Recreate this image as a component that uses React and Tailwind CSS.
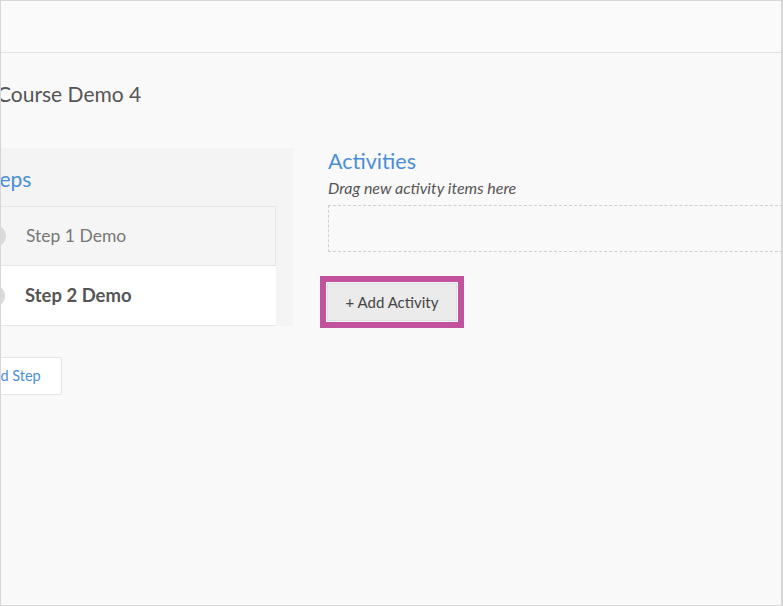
import React from "react";

const steps = [
  { name: "Step 1 Demo", active: false },
  { name: "Step 2 Demo", active: true },
];

function StepRow({ step }) {
  return (
    <div
      className={`flex items-center h-[60px] border-[#e6e6e6] ${
        step.active ? "bg-white border-b" : "bg-[#f5f5f5] border"
      }`}
    >
      <span className="w-[22px] h-[22px] rounded-full bg-[#dadada] shrink-0 ml-[2px]" />
      <span
        className={`ml-[20px] ${
          step.active ? "text-[18.5px] font-bold text-[#555]" : "text-[17.5px] text-[#777]"
        }`}
      >
        {step.name}
      </span>
    </div>
  );
}

export default function App() {
  return (
    <div
      className="w-[783px] h-[606px] overflow-hidden bg-[#f9f9f9] border border-r-2 border-[#d6d6d6] flex flex-col"
      style={{ fontFamily: "Lato, 'Open Sans', sans-serif" }}
    >
      {/* top bar */}
      <div className="h-[52px] shrink-0 bg-[#fafafa] border-b border-[#e2e2e2]" />

      <div className="ml-[-37px]">
        <h1 className="ml-[33px] mt-[27px] text-[21px] leading-[28px] text-[#555]">
          Course Demo 4
        </h1>

        <div className="flex mt-[40px]">
          {/* steps column */}
          <div className="w-[329px] shrink-0">
            <div className="bg-[#f4f4f4] pt-[17px] pr-[17px] pl-[17px]">
              <h2 className="text-[21px] leading-[28px] text-[#4b8ed6]">Steps</h2>
              <div className="mt-[13px]">
                {steps.map((s) => (
                  <StepRow key={s.name} step={s} />
                ))}
              </div>
            </div>
            <button className="mt-[31px] ml-[-10px] h-[38px] pl-[16px] pr-[20px] bg-white border border-[#e3e3e3] rounded-[3px] text-[14.5px] text-[#4b8ed6]">
              + Add Step
            </button>
          </div>

          {/* activities column */}
          <div className="ml-[35px] w-[470px] shrink-0 -mt-[1px]">
            <h2 className="text-[21.5px] leading-[28px] text-[#4b8ed6]">Activities</h2>
            <p className="italic text-[16px] leading-[22px] text-[#555] mt-[2px]">
              Drag new activity items here
            </p>
            <div className="mt-[6px] h-[47px] border border-dashed border-[#cfcfcf]" />
            <div className="mt-[24px] ml-[-8px] w-fit border-[6px] border-[#c1539e] p-[1px] bg-[#f7f7f7]">
              <button className="w-[130px] h-[38px] bg-[#ebebeb] border border-[#dedede] text-[15px] text-[#444]">
                + Add Activity
              </button>
            </div>
          </div>
        </div>
      </div>
    </div>
  );
}
